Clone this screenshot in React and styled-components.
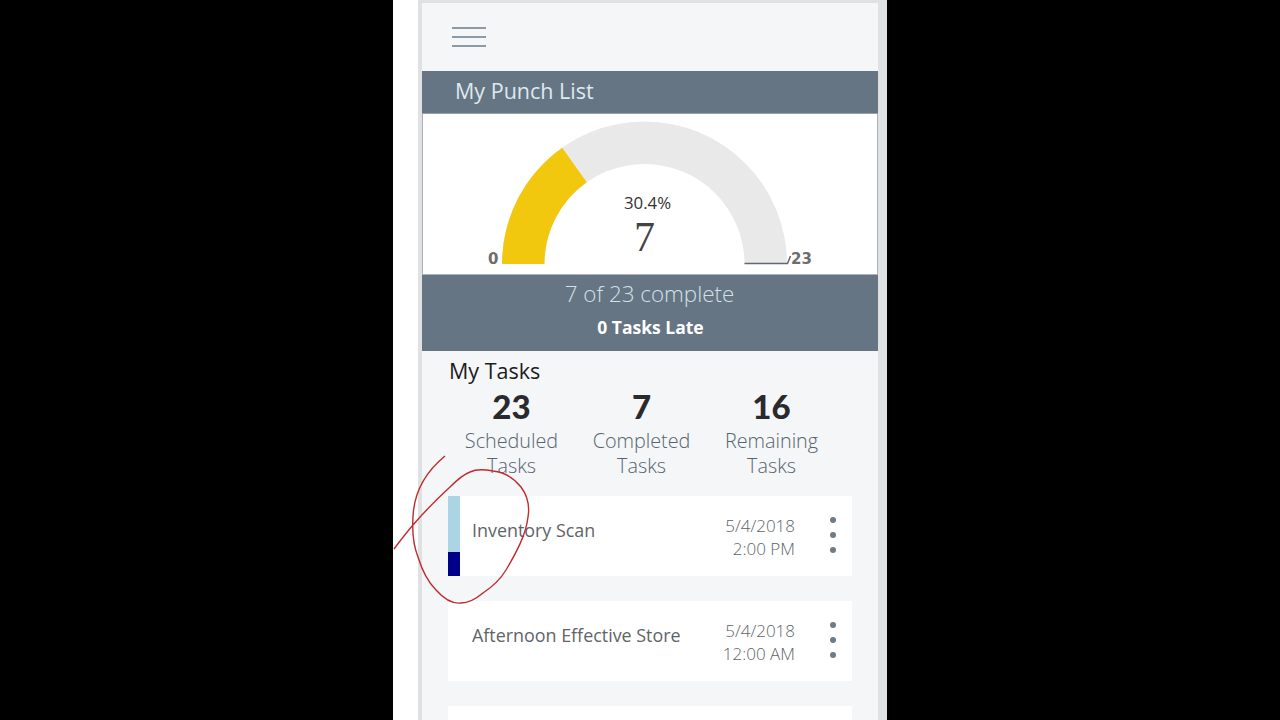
import React from "react";
import styled, { createGlobalStyle } from "styled-components";

const Global = createGlobalStyle`
  html, body { margin: 0; padding: 0; background: #000; height: 100%; overflow: hidden; }
  #root { height: 100%; }
`;
const Page = styled.div`
  position: relative; width: 1280px; height: 720px; background: #000; overflow: hidden;
  display: flex; justify-content: center; box-sizing: border-box;
  font-family: "Open Sans", "Liberation Sans", sans-serif;
`;
const Phone = styled.div`
  width: 494px; height: 720px; background: #fff; padding-left: 25px; box-sizing: border-box; flex: none;
`;
const Frame = styled.div`
  width: 469px; height: 720px; background: #e0e1e3; padding: 3px 9px 0 4px; box-sizing: border-box; overflow: hidden;
`;
const Screen = styled.div`
  background: #f4f6f8; min-height: 760px;
`;
const TopBar = styled.div`
  height: 68px; display: flex; align-items: center; padding: 0 0 0 30px; box-sizing: border-box;
`;
const MenuButton = styled.div`
  width: 34px; height: 20px; display: flex; flex-direction: column; justify-content: space-between; margin-top: -1px;
`;
const MenuLine = styled.span`
  display: block; height: 2px; background: #8c9aa6;
`;
const TitleBar = styled.div`
  height: 43px; background: #657583; color: #dfe8ee; font-size: 21.5px; line-height: 40px; padding-left: 33px;
  border-bottom: 1px solid #93a0ab; box-sizing: border-box;
`;
const GaugePanel = styled.div`
  height: 161px; background: #fff; border-left: 1px solid #aab3bc; border-right: 1px solid #aab3bc; box-sizing: border-box;
  border-bottom: 1px solid #a9b3bc;
`;
const GaugeSvg = styled.svg`
  display: block; width: 454px; height: 160px;
`;
const Summary = styled.div`
  height: 76px; background: #657583; display: flex; flex-direction: column; align-items: center;
`;
const SummaryMain = styled.div`
  color: #d5e0e8; font-size: 22.4px; font-weight: 300; line-height: 30px; margin-top: 4px; margin-left: -1px;
  white-space: nowrap;
`;
const SummaryLate = styled.div`
  color: #fff; font-size: 17.5px; font-weight: 700; line-height: 22px; margin-top: 7px; margin-left: 1px;
  white-space: nowrap;
`;
const TasksSection = styled.div`
  padding: 6px 26px 0 26px;
`;
const SectionTitle = styled.div`
  font-size: 21.5px; line-height: 27px; color: #1c1c1c; padding-left: 1px;
`;
const Stats = styled.div`
  display: flex; height: 109px; margin-top: 3px; margin-left: -1.5px;
`;
const Stat = styled.div`
  width: 130px; flex: none; display: flex; flex-direction: column; align-items: center; text-align: center;
`;
const StatValue = styled.div`
  font-family: Lato, "Open Sans", sans-serif; font-weight: 900; font-size: 33px; line-height: 38px; color: #2a2a2e;
`;
const StatLabel = styled.div`
  font-size: 19.8px; font-weight: 300; line-height: 24.5px; color: #56646f; margin-top: 4px;
`;
const Cards = styled.div`
  display: flex; flex-direction: column; gap: 25px;
`;
const Card = styled.div`
  height: 80px; background: #fff; display: flex; flex: none; width: 404px;
`;
const Progress = styled.div`
  width: 12px; flex: none; display: flex; flex-direction: column;
`;
const ProgressTodo = styled.div`
  height: 56px; background: #abd5e5;
`;
const ProgressDone = styled.div`
  height: 24px; background: #00008b;
`;
const CardBody = styled.div`
  flex: 1; min-width: 0; display: flex; align-items: flex-start; padding-left: ${p => (p.$bar ? 12 : 24)}px;
`;
const CardName = styled.div`
  flex: 1; font-size: 17.9px; color: #5e6468; line-height: 24px; margin-top: 22px; white-space: nowrap;
`;
const CardDate = styled.div`
  width: 100px; flex: none; text-align: right; font-size: 17px; font-weight: 300; color: #5e6468; line-height: 23px; margin-top: 18px;
`;
const Kebab = styled.div`
  width: 57px; height: 80px; flex: none; display: flex; flex-direction: column; align-items: flex-start; gap: 9px;
  padding: 21px 0 0 34.5px; box-sizing: border-box;
`;
const Dot = styled.span`
  display: block; width: 6px; height: 6px; border-radius: 50%; background: #6f7a83;
`;
const Scribble = styled.svg`
  position: absolute; left: 0; top: 0; width: 1280px; height: 720px; pointer-events: none;
`;

const stats = [
  { v: "23", a: "Scheduled" },
  { v: "7", a: "Completed" },
  { v: "16", a: "Remaining" },
];
const tasks = [
  { name: "Inventory Scan", d: "5/4/2018", t: "2:00 PM", bar: true },
  { name: "Afternoon Effective Store", d: "5/4/2018", t: "12:00 AM" },
  { name: "", d: "", t: "" },
];

function Gauge() {
  const cx = 221.5, cy = 150, R = 142.5, r = 100;
  const a = Math.PI * 0.304;
  const ox = cx - R * Math.cos(a), oy = cy - R * Math.sin(a);
  const ix = cx - r * Math.cos(a), iy = cy - r * Math.sin(a);
  return (
    <GaugeSvg viewBox="0 0 454 160">
      <path d={`M${cx - R} ${cy}A${R} ${R} 0 0 1 ${cx + R} ${cy}L${cx + r} ${cy}A${r} ${r} 0 0 0 ${cx - r} ${cy}Z`} fill="#e9e9e9" />
      <path d={`M${cx - R} ${cy}A${R} ${R} 0 0 1 ${ox} ${oy}L${ix} ${iy}A${r} ${r} 0 0 0 ${cx - r} ${cy}Z`} fill="#f2c80f" />
      <path d={`M${cx + r} ${cy - 0.5}H${cx + R + 0.5}L${cx + R + 3.5} ${cy - 8}`} fill="none" stroke="#60676e" strokeWidth="1.5" />
      <text x="224.5" y="95" textAnchor="middle" fontFamily="'Open Sans', sans-serif" fontSize="16.8" fill="#333">30.4%</text>
      <text x="221.5" y="137" textAnchor="middle" fontFamily="'Liberation Serif', serif" fontSize="42" fill="#444">7</text>
      <text x="65" y="149.5" fontFamily="'DejaVu Sans', sans-serif" fontWeight="700" fontSize="15" fill="#6d6d6d">0</text>
      <text x="368" y="149.5" fontFamily="'DejaVu Sans', sans-serif" fontWeight="700" fontSize="15" fill="#6d6d6d">23</text>
    </GaugeSvg>
  );
}

export default function App() {
  return (
    <Page>
      <Global />
      <Phone>
        <Frame>
          <Screen>
            <TopBar>
              <MenuButton>
                <MenuLine /><MenuLine /><MenuLine />
              </MenuButton>
            </TopBar>
            <TitleBar>My Punch List</TitleBar>
            <GaugePanel><Gauge /></GaugePanel>
            <Summary>
              <SummaryMain>7 of 23 complete</SummaryMain>
              <SummaryLate>0 Tasks Late</SummaryLate>
            </Summary>
            <TasksSection>
              <SectionTitle>My Tasks</SectionTitle>
              <Stats>
                {stats.map(s => (
                  <Stat key={s.a}>
                    <StatValue>{s.v}</StatValue>
                    <StatLabel>{s.a}<br />Tasks</StatLabel>
                  </Stat>
                ))}
              </Stats>
              <Cards>
                {tasks.map((t, i) => (
                  <Card key={i}>
                    {t.bar && <Progress><ProgressTodo /><ProgressDone /></Progress>}
                    <CardBody $bar={t.bar}>
                      <CardName>{t.name}</CardName>
                      {t.d ? <CardDate>{t.d}<br />{t.t}</CardDate> : null}
                      {t.d ? <Kebab><Dot /><Dot /><Dot /></Kebab> : null}
                    </CardBody>
                  </Card>
                ))}
              </Cards>
            </TasksSection>
          </Screen>
        </Frame>
      </Phone>
      <Scribble viewBox="0 0 1280 720">
        <path d="M445 456C428 470 414 490 413 517C412 532 414 547 418 557C422 570 429 583 436 590C444 599 452 604 461 603C470 603 477 598 483 593C492 587 500 580 506 570C516 553 526 535 528 517C530 505 527 495 521 487C513 477 503 472 493 471C483 469 476 469 470 472C462 475 456 481 450 487C437 499 425 511 413 525C406 533 400 541 394 549" fill="none" stroke="#bf2a2e" strokeWidth="1.4" />
      </Scribble>
    </Page>
  );
}
